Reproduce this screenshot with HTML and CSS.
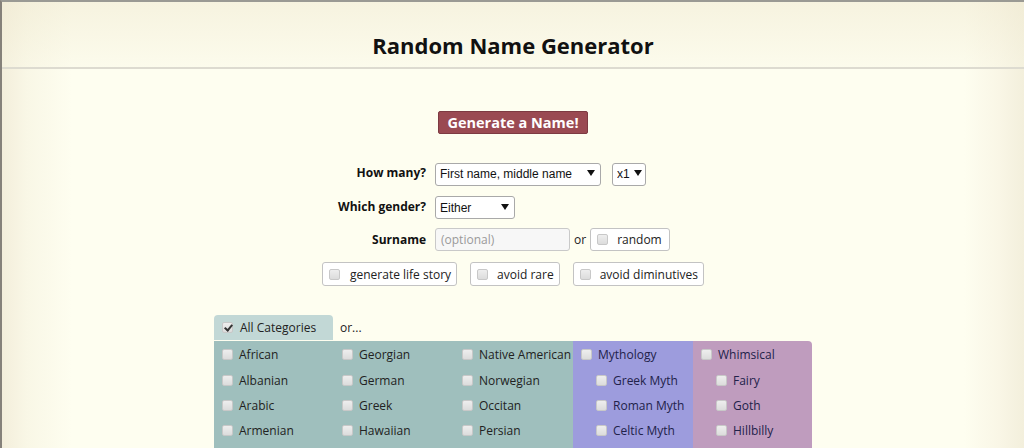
FILE: index.html
```html
<!DOCTYPE html>
<html lang="en">
<head>
<meta charset="utf-8">
<title>Random Name Generator</title>
<link rel="stylesheet" href="styles.css">
</head>
<body>
<div class="page">
  <header class="masthead">
    <h1 class="title">Random Name Generator</h1>
  </header>
  <main class="main">
    <button class="generate" type="button">Generate a Name!</button>

    <div class="form">
      <label class="flabel">How many?</label>
      <div class="fctrl">
        <span class="sel sel-many"><select><option>First name, middle name</option></select></span>
        <span class="sel sel-x"><select><option>x1</option></select></span>
      </div>

      <label class="flabel">Which gender?</label>
      <div class="fctrl">
        <span class="sel sel-gender"><select><option>Either</option></select></span>
      </div>

      <label class="flabel">Surname</label>
      <div class="fctrl">
        <input class="text" type="text" placeholder="(optional)">
        <span class="or">or</span>
        <label class="opt"><input type="checkbox" class="cb"><span>random</span></label>
      </div>
    </div>

    <div class="options">
      <label class="opt"><input type="checkbox" class="cb"><span>generate life story</span></label>
      <label class="opt"><input type="checkbox" class="cb"><span>avoid rare</span></label>
      <label class="opt"><input type="checkbox" class="cb"><span>avoid diminutives</span></label>
    </div>

    <section class="cats">
      <div class="tabs">
        <label class="tab"><input type="checkbox" class="cb" checked><span>All Categories</span></label>
        <span class="tab-or">or...</span>
      </div>
      <div class="grid">
        <div class="col teal">
          <label class="item"><input type="checkbox" class="cb"><span>African</span></label>
          <label class="item"><input type="checkbox" class="cb"><span>Albanian</span></label>
          <label class="item"><input type="checkbox" class="cb"><span>Arabic</span></label>
          <label class="item"><input type="checkbox" class="cb"><span>Armenian</span></label>
        </div>
        <div class="col teal">
          <label class="item"><input type="checkbox" class="cb"><span>Georgian</span></label>
          <label class="item"><input type="checkbox" class="cb"><span>German</span></label>
          <label class="item"><input type="checkbox" class="cb"><span>Greek</span></label>
          <label class="item"><input type="checkbox" class="cb"><span>Hawaiian</span></label>
        </div>
        <div class="col teal">
          <label class="item"><input type="checkbox" class="cb"><span>Native American</span></label>
          <label class="item"><input type="checkbox" class="cb"><span>Norwegian</span></label>
          <label class="item"><input type="checkbox" class="cb"><span>Occitan</span></label>
          <label class="item"><input type="checkbox" class="cb"><span>Persian</span></label>
        </div>
        <div class="col myth">
          <label class="item"><input type="checkbox" class="cb"><span>Mythology</span></label>
          <label class="item sub"><input type="checkbox" class="cb"><span>Greek Myth</span></label>
          <label class="item sub"><input type="checkbox" class="cb"><span>Roman Myth</span></label>
          <label class="item sub"><input type="checkbox" class="cb"><span>Celtic Myth</span></label>
        </div>
        <div class="col whim">
          <label class="item"><input type="checkbox" class="cb"><span>Whimsical</span></label>
          <label class="item sub"><input type="checkbox" class="cb"><span>Fairy</span></label>
          <label class="item sub"><input type="checkbox" class="cb"><span>Goth</span></label>
          <label class="item sub"><input type="checkbox" class="cb"><span>Hillbilly</span></label>
        </div>
      </div>
    </section>
  </main>
</div>
</body>
</html>
```

FILE: styles.css
```css
html, body {
  margin: 0;
  padding: 0;
  height: 100%;
}
body {
  font-family: "Open Sans", "DejaVu Sans", sans-serif;
  color: #111;
  background: #fefef0;
  overflow: hidden;
}
.page {
  min-height: 100%;
  box-sizing: border-box;
  border-top: 2px solid #9a9a94;
  border-left: 2px solid #85817a;
  background: linear-gradient(to right, #f3eedb 0, #f9f7e6 25px, #fefef0 70px, #fefef0 calc(100% - 60px), #f9f6e6 calc(100% - 25px), #f3efdc 100%);
}
.masthead {
  height: 65px;
  display: flex;
  align-items: flex-end;
  justify-content: center;
  border-bottom: 2px solid #dddbd0;
  background: linear-gradient(to bottom, rgba(240,234,210,0.55), rgba(248,246,228,0.35));
}
.title {
  margin: 0 0 7px 0;
  font-family: "Open Sans", sans-serif;
  font-weight: 700;
  font-size: 22px;
  line-height: 30px;
  color: #111;
}
.main {
  display: flex;
  flex-direction: column;
  align-items: center;
  padding-top: 42px;
}
.generate {
  font-family: "Open Sans", sans-serif;
  font-weight: 700;
  font-size: 14.5px;
  color: #fff;
  background: #9a4a52;
  border: 1px solid #7d3a42;
  border-radius: 2px;
  height: 23px;
  width: 150px;
  padding: 0;
  line-height: 20px;
}
.form {
  align-self: stretch;
  display: grid;
  grid-template-columns: 424px 1fr;
  column-gap: 9px;
  row-gap: 10.5px;
  margin-top: 27px;
}
.flabel {
  justify-self: end;
  align-self: center;
  font-weight: 700;
  font-size: 12px;
}
.fctrl {
  display: flex;
  align-items: center;
  gap: 11px;
  height: 23px;
}
.sel {
  position: relative;
  display: inline-block;
  height: 23px;
}
.sel select {
  appearance: none;
  -webkit-appearance: none;
  height: 23px;
  box-sizing: border-box;
  border: 1px solid #a9a9a9;
  border-radius: 3px;
  background: #fff;
  font-family: "Liberation Sans", Arial, sans-serif;
  font-size: 12px;
  color: #111;
  padding: 0 0 0 4px;
}
.sel::after {
  content: "";
  position: absolute;
  top: 9px;
  border-left: 4px solid transparent;
  border-right: 4px solid transparent;
  border-top: 6px solid #111;
  pointer-events: none;
}
.sel-many select { width: 166px; }
.sel-many::after { right: 6px; }
.sel-x select { width: 34px; padding-left: 4px; }
.sel-x::after { right: 4px; }
.sel-gender select { width: 80px; }
.sel-gender::after { right: 6px; }
.text {
  width: 135px;
  height: 23px;
  box-sizing: border-box;
  border: 1px solid #c9c9c9;
  border-radius: 3px;
  background: #f7f7f7;
  font-family: "Open Sans", sans-serif;
  font-size: 12px;
  padding: 0 5px;
}
.text::placeholder { color: #9a9a9a; }
.fctrl .or {
  font-size: 12px;
  color: #222;
  margin: 0 -7px 0 -7px;
}
.opt {
  display: inline-flex;
  align-items: center;
  gap: 9px;
  height: 24px;
  box-sizing: border-box;
  padding: 0 5px 0 6px;
  border: 1px solid #c3c3c3;
  border-radius: 3px;
  background: #fff;
  font-size: 12px;
  color: #222;
}
.opt:first-child { gap: 10px; }
.fctrl .opt { height: 23px; padding: 0 7px 0 6px; gap: 9px; }
.options {
  display: flex;
  gap: 13px;
  margin-top: 11px;
}
.cb {
  appearance: none;
  -webkit-appearance: none;
  margin: 0;
  width: 11px;
  height: 11px;
  box-sizing: border-box;
  border: 1px solid #c8c8c8;
  border-radius: 2px;
  background: linear-gradient(#eeeeee, #dcdcdc);
  position: relative;
  flex: none;
}
.cb:checked::after {
  content: "";
  position: absolute;
  left: 3px;
  top: 0px;
  width: 3px;
  height: 6px;
  border-right: 2px solid #333;
  border-bottom: 2px solid #333;
  transform: rotate(40deg);
}
.cats {
  width: 598px;
  margin-top: 29px;
  font-size: 12px;
  color: #222;
}
.tabs {
  display: flex;
  align-items: center;
  height: 25px;
}
.tab {
  width: 119px;
  height: 25px;
  box-sizing: border-box;
  display: flex;
  align-items: center;
  gap: 7px;
  padding-left: 8px;
  background: #c2d8d6;
  border-radius: 4px 4px 0 0;
  color: #222;
}
.tab-or {
  margin-left: 7px;
}
.grid {
  display: grid;
  grid-template-columns: 120px 120px 119px 120px 119px;
  margin-top: 1px;
}
.col {
  display: flex;
  flex-direction: column;
  padding-top: 1px;
  min-height: 120px;
}
.teal { background: #9fbfbd; }
.myth { background: #9d9cdd; }
.whim { background: #bf9cbe; border-radius: 0 4px 0 0; }
.item {
  height: 25.4px;
  display: flex;
  align-items: center;
  gap: 6px;
  padding-left: 8px;
  white-space: nowrap;
}
.item.sub { padding-left: 23px; }
.myth .item, .whim .item { color: #22224a; }
```
